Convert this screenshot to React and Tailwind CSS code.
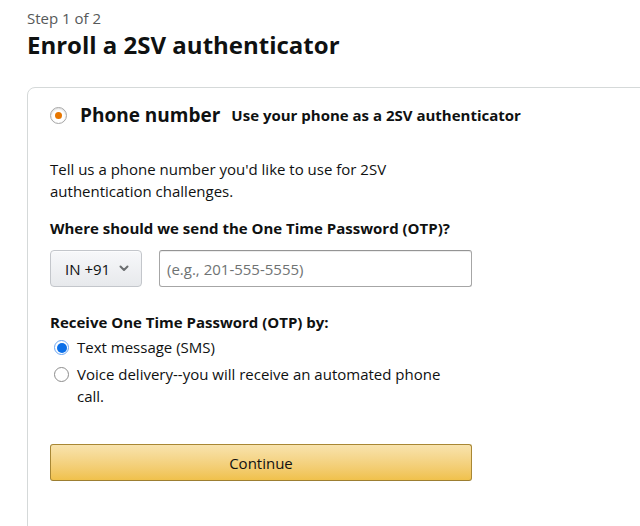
export default function App() {
  const font = { fontFamily: '"Open Sans", "Noto Sans", Arial, sans-serif' };
  return (
    <div className="h-[526px] w-[640px] overflow-hidden bg-white text-[#0f1111]" style={font}>
      <div className="pl-[27px] pt-[7px]">
        <div className="text-[15px] leading-[22px] text-[#565959]">Step 1 of 2</div>
        <h1 className="text-[24px] font-bold leading-[32px]">Enroll a 2SV authenticator</h1>
        <div className="mt-[26px] w-[700px] rounded-[8px] border border-[#d5d9d9] pl-[22px] pt-[13px] pb-[60px]">
          <div className="flex items-center h-[28px]">
            <span className="flex h-[17px] w-[17px] items-center justify-center rounded-full border border-[#a6a6a6] bg-white shadow-[inset_0_1px_2px_rgba(0,0,0,0.15)]">
              <span className="h-[7px] w-[7px] rounded-full bg-[#e77600]" />
            </span>
            <span className="ml-[13px] text-[19px] font-bold leading-[28px]">Phone number</span>
            <span className="ml-[11px] text-[15px] font-bold leading-[28px]">Use your phone as a 2SV authenticator</span>
          </div>
          <div className="w-[422px]">
            <p className="mt-[29px] text-[15px] leading-[22px]">
              Tell us a phone number you'd like to use for 2SV authentication challenges.
            </p>
            <div className="mt-[15px] text-[15px] font-bold leading-[22px]">
              Where should we send the One Time Password (OTP)?
            </div>
            <div className="mt-[11px] flex gap-[17px]">
              <div className="flex h-[37px] w-[92px] items-center rounded-[4px] border border-[#c3c6cb] bg-gradient-to-b from-[#f7f8fa] to-[#e7e9ec] pl-[14px] shadow-[0_1px_0_rgba(255,255,255,0.6)_inset]">
                <span className="text-[15px] leading-[22px]">IN +91</span>
                <svg className="ml-[9px]" width="10" height="7" viewBox="0 0 10 7">
                  <path d="M1.5 1.5 L5 5 L8.5 1.5" fill="none" stroke="#6b6e70" strokeWidth="2" strokeLinecap="round" strokeLinejoin="round" />
                </svg>
              </div>
              <div className="flex h-[37px] flex-1 items-center rounded-[3px] border border-[#a6a6a6] border-t-[#949494] pl-[7px] shadow-[inset_0_1px_0_rgba(0,0,0,0.07)]">
                <span className="text-[15px] leading-[22px] text-[#6f7373]">(e.g., 201-555-5555)</span>
              </div>
            </div>
            <div className="mt-[24px] text-[15px] font-bold leading-[22px]">Receive One Time Password (OTP) by:</div>
            <div className="mt-[3px] flex items-start">
              <span className="ml-[4px] mt-[4px] flex h-[15px] w-[15px] shrink-0 items-center justify-center rounded-full border border-[#6aa5f2] bg-white">
                <span className="h-[10px] w-[10px] rounded-full bg-[#0b6fe8]" />
              </span>
              <span className="ml-[8px] text-[15px] leading-[22px]">Text message (SMS)</span>
            </div>
            <div className="mt-[5px] flex items-start">
              <span className="ml-[4px] mt-[4px] h-[15px] w-[15px] shrink-0 rounded-full border border-[#8d8d8d] bg-white" />
              <span className="ml-[8px] w-[375px] text-[15px] leading-[22px]">Voice delivery--you will receive an automated phone call.</span>
            </div>
            <button className="mt-[37px] flex h-[37px] w-full items-center justify-center rounded-[3px] border border-[#a88734] border-b-[#9c7e31] bg-gradient-to-b from-[#f8e3ad] to-[#f0c14b] text-[15px] leading-[22px] text-[#111]">
              Continue
            </button>
          </div>
        </div>
      </div>
    </div>
  );
}
